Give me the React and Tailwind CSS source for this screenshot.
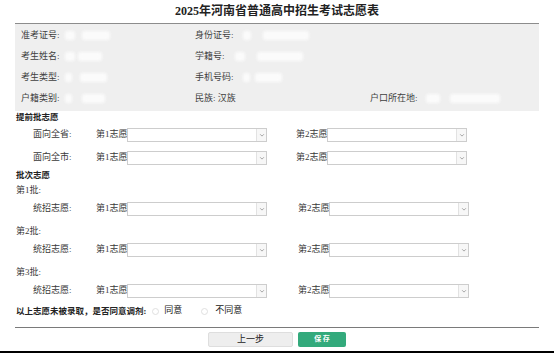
import React from 'react';

const Blur = ({ className }) => (
  <span className={`h-[9px] shrink-0 rounded-[2px] bg-[#fbfbfb] blur-[1.5px] ${className}`} />
);

const Select = () => (
  <div className="relative flex h-[14px] w-[140px] shrink-0 border border-[#cdcdcd] bg-white">
    <div className="flex-1" />
    <div className="flex w-[10px] items-center justify-center border-l border-[#e2e2e2] bg-[#f7f7f7]">
      <svg viewBox="0 0 8 8" className="h-[6px] w-[6px]">
        <path d="M1.5 3 L4 5.5 L6.5 3" fill="none" stroke="#8a8a8a" strokeWidth="1" />
      </svg>
    </div>
  </div>
);

const ChoiceRow = ({ label, batch }) => (
  <div className="flex items-center pl-[18px]">
    <span className="w-[63px] shrink-0">{label}</span>
    <span className="w-[31px] shrink-0 whitespace-nowrap">第1志愿:</span>
    <Select />
    <span className={`${batch ? 'ml-[31px]' : 'ml-[29px]'} w-[31px] shrink-0 whitespace-nowrap`}>第2志愿:</span>
    <Select />
  </div>
);

const Batch = ({ name }) => (
  <div className="flex h-[41px] flex-col">
    <div className="flex h-[20px] items-center pl-[1px]">{name}</div>
    <div className="flex h-[16px] items-center">
      <ChoiceRow label="统招志愿:" batch />
    </div>
  </div>
);

const Radio = () => (
  <span className="inline-block h-[7px] w-[7px] rounded-full border border-[#e0e0e0] bg-white" />
);

export default function App() {
  return (
    <div className="relative h-[353px] w-[554px] overflow-hidden bg-white font-['Liberation_Serif','Noto_Sans_CJK_SC',serif] text-[9px] text-[#3a3a3a]">
      <div className="mx-[15px] flex flex-col">
        {/* Title */}
        <div className="flex h-[24px] items-center justify-center border-b border-[#8c8c8c] pb-[2px] text-[12px] font-bold text-[#222]">
          2025年河南省普通高中招生考试志愿表
        </div>

        {/* Student info */}
        <div className="flex h-[87px] flex-col bg-[#efefef] pl-[6px] pt-[1px] text-[#404040]">
          <div className="flex h-[21px] items-center">
            <div className="flex w-[174px] items-center">
              <span className="w-[44px]">准考证号:</span>
              <Blur className="w-[10px]" />
              <Blur className="ml-[7px] w-[28px]" />
            </div>
            <div className="flex items-center">
              <span className="w-[48px]">身份证号:</span>
              <Blur className="w-[8px]" />
              <Blur className="ml-[12px] w-[46px]" />
            </div>
          </div>
          <div className="flex h-[21px] items-center">
            <div className="flex w-[174px] items-center">
              <span className="w-[44px]">考生姓名:</span>
              <Blur className="w-[10px]" />
              <Blur className="ml-[3px] w-[24px]" />
            </div>
            <div className="flex items-center">
              <span className="w-[40px]">学籍号:</span>
              <Blur className="w-[10px]" />
              <Blur className="ml-[12px] w-[46px]" />
            </div>
          </div>
          <div className="flex h-[21px] items-center">
            <div className="flex w-[174px] items-center">
              <span className="w-[44px]">考生类型:</span>
              <Blur className="w-[7px]" />
              <Blur className="ml-[8px] w-[27px]" />
            </div>
            <div className="flex items-center">
              <span className="w-[48px]">手机号码:</span>
              <Blur className="w-[7px]" />
              <Blur className="ml-[5px] w-[27px]" />
            </div>
          </div>
          <div className="flex h-[21px] items-center">
            <div className="flex w-[174px] items-center">
              <span className="w-[44px]">户籍类别:</span>
              <Blur className="w-[7px]" />
              <Blur className="ml-[10px] w-[23px]" />
            </div>
            <div className="flex w-[175px] items-center">
              <span>民族: 汉族</span>
            </div>
            <div className="flex items-center">
              <span className="w-[56px]">户口所在地:</span>
              <Blur className="w-[14px]" />
              <Blur className="ml-[10px] w-[50px]" />
            </div>
          </div>
        </div>

        {/* Early batch */}
        <div className="flex h-[12px] items-center pl-[1px] font-bold text-[8.5px] text-[#222]">提前批志愿</div>
        <div className="flex h-[23px] items-center">
          <ChoiceRow label="面向全省:" />
        </div>
        <div className="flex h-[23px] items-center">
          <ChoiceRow label="面向全市:" />
        </div>

        {/* Batch choices */}
        <div className="flex h-[12px] items-center pl-[1px] font-bold text-[8.5px] text-[#222]">批次志愿</div>
        <Batch name="第1批:" />
        <Batch name="第2批:" />
        <Batch name="第3批:" />

        <div className="flex h-[14px] items-center gap-[4px] pl-[1px] text-[#222]">
          <span className="font-bold text-[8.5px]">以上志愿未被录取，是否同意调剂:</span>
          <span className="ml-[2px] flex items-center gap-[5px]">
            <Radio />
            <span>同意</span>
          </span>
          <span className="ml-[15px] flex items-center gap-[7px]">
            <Radio />
            <span>不同意</span>
          </span>
        </div>

        {/* Footer */}
        <div className="mt-[9px] flex h-[24px] justify-center gap-[5px] border-t border-[#7a7a7a] pt-[4px]">
          <button className="h-[15px] w-[85px] rounded-[2px] border border-[#dedede] bg-[#eeeeee] text-[9px] text-[#222]">
            上一步
          </button>
          <button className="h-[15px] w-[48px] rounded-[2px] bg-[#33aa7c] text-[7px] font-bold text-white">
            保 存
          </button>
        </div>
      </div>
      <div className="absolute bottom-0 left-0 h-[2px] w-full bg-black" />
    </div>
  );
}
